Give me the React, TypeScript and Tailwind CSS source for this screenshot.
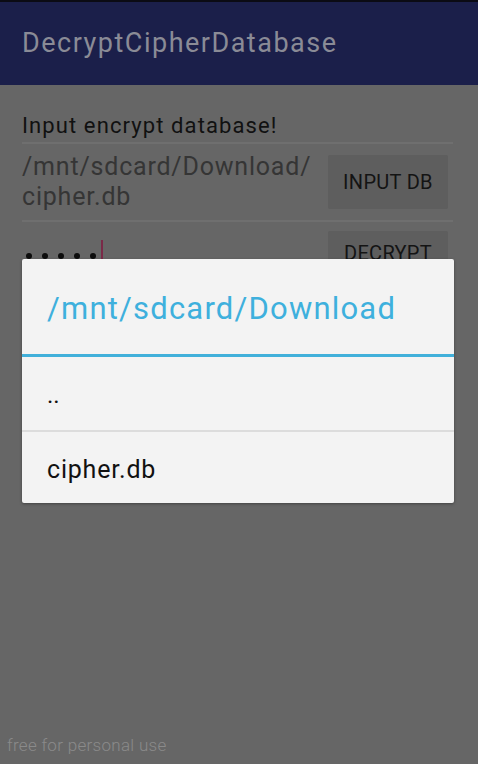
import React from 'react';

const App: React.FC = () => {
  return (
    <div className="relative w-[478px] h-[764px] overflow-hidden bg-[#666666] font-['Roboto',sans-serif]">
      <div className="h-[2px] bg-[#0b0b14]" />
      {/* Action bar */}
      <div className="h-[83px] bg-[#1b1f4a] flex items-center px-[22px]">
        <h1 className="text-[27px] tracking-[1.5px] text-[#8a8b96] leading-none">DecryptCipherDatabase</h1>
      </div>

      {/* Form */}
      <div className="px-[22px] pt-[26px]">
        <p className="text-[22px] tracking-[1.1px] leading-[30px] text-[#111111]">Input encrypt database!</p>
        <div className="h-[2px] bg-[#6f6f6f] mt-[1px] mr-[3px]" />

        <div className="flex items-center justify-between h-[76px] mr-[8px]">
          <p className="text-[25px] tracking-[0.8px] leading-[30px] text-[#353535]">
            /mnt/sdcard/Download/
            <br />
            cipher.db
          </p>
          <button className="w-[120px] h-[54px] bg-[#5e5e5e] rounded-[2px] text-[20px] tracking-[0.3px] text-[#141414]">INPUT DB</button>
        </div>
        <div className="h-[2px] bg-[#6f6f6f] mr-[3px]" />

        <div className="flex items-start justify-between mt-[9px] mr-[8px]">
          <div className="flex items-end h-[29px] pl-[4px]">
            <div className="flex gap-[10px] pb-[1px]">
              <span className="w-[6px] h-[6px] rounded-full bg-[#0d0d0d]" />
              <span className="w-[6px] h-[6px] rounded-full bg-[#0d0d0d]" />
              <span className="w-[6px] h-[6px] rounded-full bg-[#0d0d0d]" />
              <span className="w-[6px] h-[6px] rounded-full bg-[#0d0d0d]" />
              <span className="w-[6px] h-[6px] rounded-full bg-[#0d0d0d]" />
            </div>
            <span className="w-[2px] h-[20px] bg-[#7a2a48] ml-[5px]" />
          </div>
          <button className="w-[120px] h-[54px] bg-[#5e5e5e] rounded-[2px] text-[20px] tracking-[0.3px] text-[#141414] pb-[10px]">DECRYPT</button>
        </div>
      </div>

      {/* Dialog */}
      <div className="absolute left-[22px] top-[259px] w-[432px] bg-[#f3f3f3] rounded-[2px] shadow-[0_1px_3px_rgba(0,0,0,0.35)]">
        <div className="h-[95px] flex items-center px-[25px]">
          <h2 className="text-[31px] tracking-[1.2px] text-[#3eb0dd] leading-none pt-[4px]">/mnt/sdcard/Download</h2>
        </div>
        <div className="h-[3px] bg-[#41b0da]" />
        <div className="h-[73px] flex items-center px-[25px] text-[24px] text-[#111111] pt-[2px]">..</div>
        <div className="h-[2px] bg-[#dcdcdc]" />
        <div className="h-[71px] flex items-center px-[25px] text-[25px] tracking-[0.8px] text-[#111111] pt-[4px]">cipher.db</div>
      </div>

      <p className="absolute left-[7px] bottom-[10px] text-[17px] tracking-[0.3px] font-light text-[#8a8a8a] leading-none">free for personal use</p>
    </div>
  );
};

export default App;
